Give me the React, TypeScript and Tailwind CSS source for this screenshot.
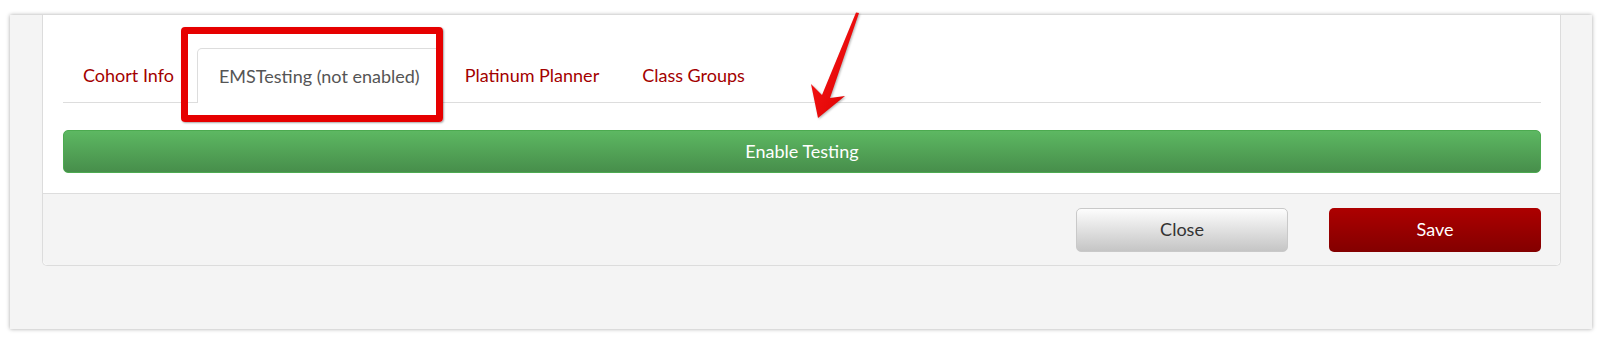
import React from "react";

const font = { fontFamily: "Lato, 'Noto Sans', sans-serif" };

function Tab({ label, active }: { label: string; active?: boolean }) {
  if (active) {
    return (
      <div className="-mb-px flex h-[55px] items-center rounded-t-[5px] border border-b-0 border-[#dddddd] bg-white px-[21px] text-[18px] text-[#555555]">
        {label}
      </div>
    );
  }
  return (
    <div className="flex h-[54px] items-center px-[20px] text-[18px] text-[#a30000]">{label}</div>
  );
}

export default function App() {
  return (
    <div className="relative h-[340px] w-[1602px] overflow-hidden bg-white pl-[10px] pt-[15px]" style={font}>
      <div className="relative h-[314px] w-[1582px] bg-[#f4f4f4] shadow-[0_0_4px_rgba(0,0,0,0.35)]">
        <div className="ml-[32px] w-[1519px] rounded-b-[5px] border-x border-b border-[#dcdcdc] bg-white">
          <div className="pl-[20px] pr-[19px] pb-[20px] pt-[33px]">
            <div className="flex gap-[3px] border-b border-[#dddddd]">
              <Tab label="Cohort Info" />
              <Tab label="EMSTesting (not enabled)" active />
              <Tab label="Platinum Planner" />
              <Tab label="Class Groups" />
            </div>
            <button className="mt-[27px] flex h-[43px] w-full items-center justify-center rounded-[5px] border border-[#4caa50] bg-gradient-to-b from-[#5db862] to-[#478e4b] text-[18px] text-white">
              Enable Testing
            </button>
          </div>
          <div className="flex h-[72px] items-center justify-end gap-[41px] rounded-b-[5px] border-t border-[#dddddd] bg-[#f4f4f4] pr-[19px]">
            <button className="flex h-[44px] w-[212px] items-center justify-center rounded-[5px] border border-[#c9c9c9] bg-gradient-to-b from-[#fdfdfd] to-[#c5c5c5] text-[18px] text-[#333333]">
              Close
            </button>
            <button className="flex h-[44px] w-[212px] items-center justify-center rounded-[5px] bg-gradient-to-b from-[#ad0000] to-[#830000] text-[18px] text-white">
              Save
            </button>
          </div>
        </div>
        <div className="absolute left-[171px] top-[12px] h-[95px] w-[262px] rounded-[4px] border-[7px] border-[#e60000] shadow-[1px_1px_2px_rgba(0,0,0,0.35)]" />
      </div>
      <svg className="pointer-events-none absolute left-0 top-0" width="1602" height="340" viewBox="0 0 1602 340">
        <defs>
          <linearGradient id="ag" x1="0" y1="0" x2="1" y2="1">
            <stop offset="0" stopColor="#ff1a1a" />
            <stop offset="1" stopColor="#d80000" />
          </linearGradient>
        </defs>
        <polygon
          points="818,118 845,96 830,98 859,13 856,12.6 822,95 811,84"
          fill="url(#ag)"
          style={{ filter: "drop-shadow(1px 1px 1px rgba(0,0,0,0.3))" }}
        />
      </svg>
    </div>
  );
}
